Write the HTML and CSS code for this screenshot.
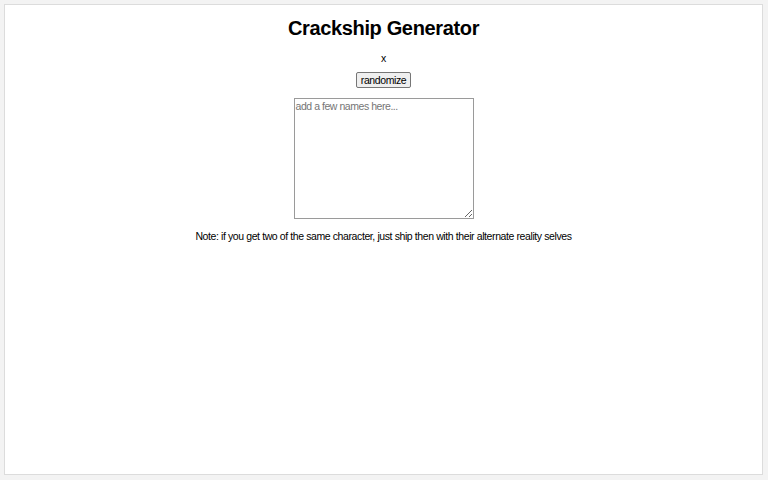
FILE: index.html
```html
<!DOCTYPE html>
<html>
<head>
<meta charset="utf-8">
<link rel="stylesheet" href="styles.css">
</head>
<body>
<div class="page">
  <h1 class="title">Crackship Generator</h1>
  <p class="result">x</p>
  <button class="btn">randomize</button>
  <textarea class="names" placeholder="add a few names here..."></textarea>
  <p class="note">Note: if you get two of the same character, just ship then with their alternate reality selves</p>
</div>
</body>
</html>
```
FILE: styles.css
```css
html, body { margin: 0; padding: 0; }
body {
  background: #f3f3f3;
  font-family: "Liberation Sans", Arial, sans-serif;
  padding: 4px 5px 5px 4px;
  height: 480px;
  box-sizing: border-box;
}
.page {
  background: #fff;
  border: 1px solid #dcdcdc;
  height: 100%;
  box-sizing: border-box;
  display: flex;
  flex-direction: column;
  align-items: center;
  color: #000;
}
.title {
  font-size: 20px;
  font-weight: bold;
  letter-spacing: -0.35px;
  margin: 11px 0 0;
  line-height: 24px;
}
.result {
  font-size: 10.5px;
  margin: 12px 0 0;
  line-height: 12px;
}
.btn {
  font-family: "Liberation Sans", Arial, sans-serif;
  font-size: 10.5px;
  letter-spacing: -0.4px;
  margin-top: 8px;
  padding: 1px 4px;
  height: 16px;
  line-height: 12px;
  background: #efefef;
  border: 1px solid #767676;
  border-radius: 2px;
  color: #000;
}
.names {
  margin-top: 10px;
  width: 180px;
  height: 121px;
  box-sizing: border-box;
  border: 1px solid #9a9a9a;
  font-family: "Liberation Sans", Arial, sans-serif;
  font-size: 10.5px;
  letter-spacing: -0.45px;
  padding: 1px;
  resize: both;
}
.names::placeholder { color: #757575; }
.note {
  font-size: 10.5px;
  margin: 10px 0 0;
  line-height: 14px;
  letter-spacing: -0.4px;
}
```
